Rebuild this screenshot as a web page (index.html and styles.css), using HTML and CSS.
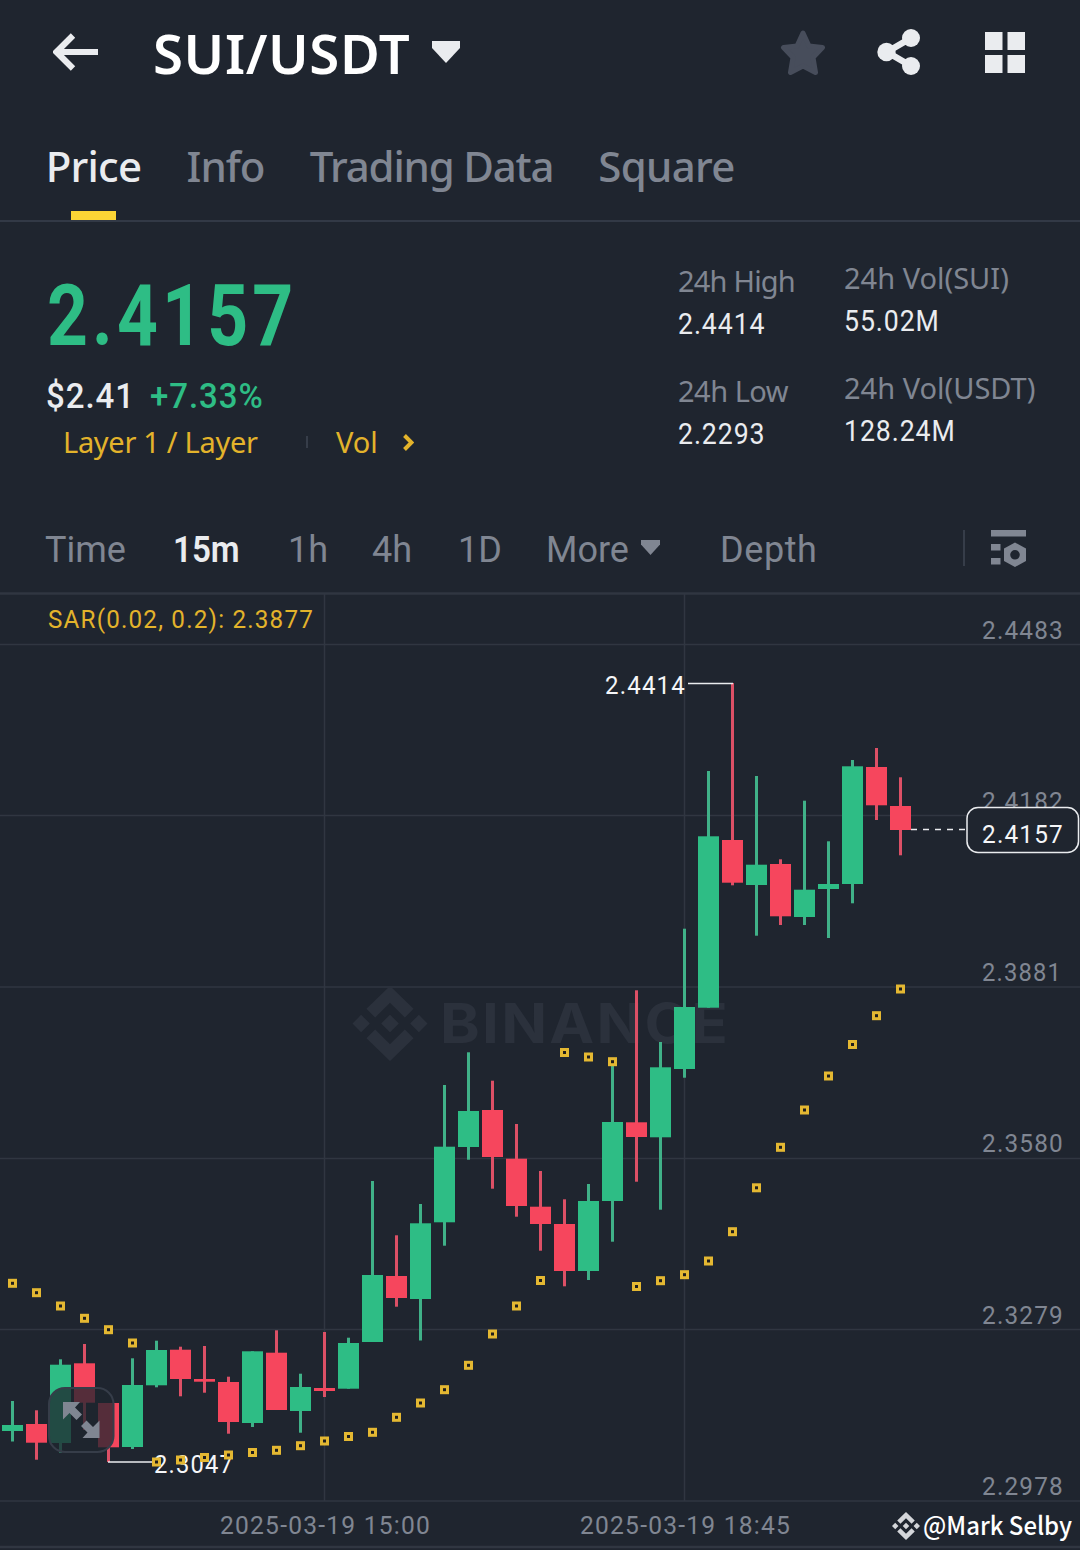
FILE: index.html
```html
<!DOCTYPE html>
<html lang="en">
<head>
<meta charset="utf-8">
<title>SUI/USDT</title>
<link rel="stylesheet" href="styles.css">
</head>
<body>
<header class="topbar">
  <svg class="back" viewBox="0 0 46 38"><path d="M45 19H4M20 2.500L3.500 19L20 35.500" fill="none" stroke="#eaecef" stroke-width="6.200"/></svg>
  <h1 class="pair">SUI/USDT</h1>
  <svg class="caret" viewBox="0 0 28 22"><path d="M0 0H28V7L14 22L0 7Z" fill="#eaecef"/></svg>
  <div class="actions">
    <svg class="star" viewBox="0 0 46 48"><path d="M23 4L29 17L42.500 18.500L33 28.500L35.500 43.500L23 37L10.500 43.500L13 28.500L3.500 18.500L17 17Z" fill="#474d5b" stroke="#474d5b" stroke-width="5" stroke-linejoin="round"/></svg>
    <svg class="share" viewBox="0 0 44 48"><path d="M34 10L10 24L34 38" fill="none" stroke="#eaecef" stroke-width="6.500"/><circle cx="34" cy="10" r="9" fill="#eaecef"/><circle cx="9.500" cy="24" r="9.200" fill="#eaecef"/><circle cx="34" cy="38" r="9" fill="#eaecef"/></svg>
    <svg class="apps" viewBox="0 0 40 41"><path d="M0 0H17.500V18H0ZM22.500 0H40V18H22.500ZM0 23H17.500V41H0ZM22.500 23H40V41H22.500Z" fill="#eaecef"/></svg>
  </div>
</header>

<nav class="tabs">
  <a class="tab price active">Price</a>
  <a class="tab info">Info</a>
  <a class="tab trading">Trading Data</a>
  <a class="tab square">Square</a>
</nav>

<section class="summary">
  <div class="quote">
    <div class="last"><span>2.4157</span></div>
    <div class="change"><span class="usd">$2.41</span><span class="pct">+7.33%</span></div>
    <div class="tags">
      <span class="layer">Layer 1 / Layer</span><i class="sep"></i><span class="vol">Vol</span>
      <svg class="chev" viewBox="0 0 11 17"><path d="M1.500 1.500L8.500 8.500L1.500 15.500" fill="none" stroke="#e3b32b" stroke-width="4"/></svg>
    </div>
  </div>
  <dl class="stats">
    <div><dt class="t-high">24h High</dt><dd>2.4414</dd></div>
    <div><dt class="t-low">24h Low</dt><dd>2.2293</dd></div>
  </dl>
  <dl class="stats volumes">
    <div><dt class="t-sui">24h Vol(SUI)</dt><dd>55.02M</dd></div>
    <div><dt class="t-usdt">24h Vol(USDT)</dt><dd>128.24M</dd></div>
  </dl>
</section>

<nav class="periods">
  <a class="p-time">Time</a>
  <a class="p-15 active">15m</a>
  <a class="p-1h">1h</a>
  <a class="p-4h">4h</a>
  <a class="p-1d">1D</a>
  <a class="p-more">More</a>
  <svg class="more-caret" viewBox="0 0 19 15"><path d="M0 0H19V4.500L9.500 15L0 4.500Z" fill="#808692"/></svg>
  <a class="p-depth">Depth</a>
  <i class="bar"></i>
  <svg class="settings" viewBox="0 0 36 37"><path d="M0 0H35V6.500H0ZM0 14H9.500V20.500H0ZM0 28H9.500V34.500H0Z" fill="#808692"/><path fill-rule="evenodd" d="M24 12.500L35 18.500V31L24 37L13 31V18.500ZM24 20A4.800 4.800 0 1 0 24 29.600A4.800 4.800 0 1 0 24 20Z" fill="#808692"/></svg>
</nav>

<main class="chart">
  <svg id="chart" viewBox="0 592 1080 958" width="1080" height="958">
    <defs>
      <symbol id="mark" viewBox="0 0 126.600 126.600">
        <path d="M38.200 53.200L63.300 28.100L88.400 53.200L103 38.600L63.300 0L23.600 38.600ZM0 63.300L14.600 48.700L29.200 63.300L14.600 77.900ZM38.200 73.400L63.300 98.500L88.400 73.400L103 88L63.300 126.600L23.600 88ZM97.400 63.300L112 48.700L126.600 63.300L112 77.900ZM63.300 48.500L78.100 63.300L63.300 78.100L48.500 63.300Z"/>
      </symbol>
    </defs>
    <path class="grid" d="M0 644.500H1080M0 815.500H1080M0 987H1080M0 1158.500H1080M0 1329.500H1080M0 1501H1080M324.500 594V1501M684.500 594V1501"/>
    <path class="frame" d="M0 593.500H1080M0 1547H1080"/>
    <g class="watermark">
      <use href="#mark" x="352" y="986" width="76" height="75"/>
      <text x="440" y="1043" textLength="290" lengthAdjust="spacingAndGlyphs">BINANCE</text>
    </g>
    <g id="candles"></g>
    <path class="pointer" d="M688 683.500H733M108 1462H156"/>
    <text class="white" x="605" y="694" textLength="81" lengthAdjust="spacingAndGlyphs">2.4414</text>
    <text class="white" x="154" y="1473" textLength="80" lengthAdjust="spacingAndGlyphs">2.3047</text>
    <g id="sar"></g>
    <text class="gold" x="48" y="628" textLength="266" lengthAdjust="spacingAndGlyphs">SAR(0.02, 0.2): 2.3877</text>
    <g class="axis">
      <text x="982" y="638.500" textLength="82" lengthAdjust="spacingAndGlyphs">2.4483</text>
      <text x="982" y="809.500" textLength="82" lengthAdjust="spacingAndGlyphs">2.4182</text>
      <text x="982" y="981" textLength="80" lengthAdjust="spacingAndGlyphs">2.3881</text>
      <text x="982" y="1152" textLength="82" lengthAdjust="spacingAndGlyphs">2.3580</text>
      <text x="982" y="1324" textLength="82" lengthAdjust="spacingAndGlyphs">2.3279</text>
      <text x="982" y="1495" textLength="82" lengthAdjust="spacingAndGlyphs">2.2978</text>
      <text x="220" y="1534" textLength="211" lengthAdjust="spacingAndGlyphs">2025-03-19 15:00</text>
      <text x="580" y="1534" textLength="211" lengthAdjust="spacingAndGlyphs">2025-03-19 18:45</text>
    </g>
    <path d="M911 829.500H966" stroke="#eaecef" stroke-width="1.500" stroke-dasharray="6 6"/>
    <rect x="967" y="807.500" width="111.500" height="45" rx="11" fill="#1f252f" stroke="#eaecef" stroke-width="1.500"/>
    <text class="white" x="982" y="843" textLength="82" lengthAdjust="spacingAndGlyphs">2.4157</text>
    <g class="expand">
      <rect x="49" y="1388" width="64.500" height="64" rx="16" fill="#1f252f" fill-opacity=".75" stroke="#363d49" stroke-width="2"/>
      <path d="M63 1402H80L75 1407.500L82 1414.500L76.500 1420L69.500 1413L63 1419.500ZM99.500 1438H82.500L87.500 1432.500L81 1426L86.500 1420.500L93 1427L99.500 1420.500Z" fill="#808692"/>
    </g>
    <use class="credit-mark" href="#mark" x="892" y="1512" width="28" height="28"/>
    <text class="credit" x="923" y="1535" textLength="149" lengthAdjust="spacingAndGlyphs">@Mark Selby</text>
  </svg>
</main>
<script src="script.js"></script>
</body>
</html>
```
FILE: styles.css
```css
* { box-sizing: border-box; }
body {
  margin: 0;
  width: 1080px;
  height: 1550px;
  overflow: hidden;
  background: #1f252f;
  color: #eaecef;
  font-family: "Noto Sans", sans-serif;
}
svg { display: block; flex: none; }
a, span, dt, dd { white-space: nowrap; }

.topbar { display: flex; align-items: center; height: 104px; padding-left: 53px; }
.back { width: 46px; height: 38px; }
.pair { margin: 2px 0 0 54px; width: 258px; font-size: 54.500px; font-weight: 600; line-height: 72px; letter-spacing: .6px; color: #fff; white-space: nowrap; }
.caret { width: 28px; height: 22px; margin-left: 21px; }
.actions { display: flex; align-items: center; margin-left: auto; padding-right: 55px; }
.star { width: 46px; height: 48px; margin-top: 2px; }
.share { width: 44px; height: 48px; margin-left: 51px; }
.apps { width: 40px; height: 41px; margin-left: 64px; }

.tabs { display: flex; gap: 46px; height: 118px; padding-left: 46px; border-bottom: 2px solid #323946; }
.tab { display: flex; flex-direction: column; align-items: center; padding-top: 34px; font-size: 42px; font-weight: 500; line-height: 56px; letter-spacing: -.8px; color: #808692; height: 116px; }
.tab.active { color: #eaecef; }
.tab.active::after { content: ""; width: 45px; height: 9px; margin-top: auto; background: #fcd535; }
.price { width: 95px; }
.info { width: 77px; letter-spacing: -1px; }
.trading { width: 243px; letter-spacing: -1.200px; }
.square { width: 135px; letter-spacing: -.7px; }

.summary { display: flex; height: 284px; }
.quote { width: 678px; padding: 44px 0 0 47px; }
.last { height: 100px; font: 700 86px/100px Roboto, sans-serif; color: #2ebd85; }
.last span { display: inline-block; transform: scaleX(.83); transform-origin: left; letter-spacing: 5px; }
.change { display: flex; gap: 18px; height: 48px; margin-top: 6px; font: 500 35.500px/48px Roboto, sans-serif; }
.change span { transform: scaleX(.93); transform-origin: left; letter-spacing: 1px; }
.usd { width: 85px; margin-left: -1px; margin-right: 1px; }
.pct { color: #2ebd85; }
.tags { display: flex; align-items: center; height: 44px; padding-left: 16px; font-size: 29px; line-height: 44px; color: #e3b32b; }
.layer { width: 194px; letter-spacing: -.3px; }
.sep { width: 2px; height: 12px; margin: 0 28px 0 49px; background: #363d49; }
.vol { width: 43px; }
.chev { width: 11px; height: 17px; margin-left: 24px; }
.stats { width: 166px; margin: 0; padding-top: 39px; }
.stats > div { height: 110px; }
.volumes { padding-top: 36px; }
.stats dt { height: 40px; font-size: 29px; line-height: 40px; color: #808692; }
.t-high { letter-spacing: -.8px; }
.t-low { letter-spacing: -.5px; }
.stats dd { height: 44px; margin: 0; font: 400 29px/47px Roboto, sans-serif; transform: scaleX(.92); transform-origin: left; letter-spacing: 1px; }

.periods { display: flex; align-items: center; height: 86px; padding: 2px 0 0 45px; font: 400 36px/48px Roboto, sans-serif; color: #808692; }
.periods .active { color: #eaecef; font-weight: 600; transform: scaleX(.92); transform-origin: left; }
.p-time { width: 128px; }
.p-15 { width: 115px; }
.p-1h { width: 84px; }
.p-4h { width: 86px; }
.p-1d { width: 88px; }
.p-more { width: 95px; }
.more-caret { width: 19px; height: 15px; margin-top: -6px; }
.p-depth { width: 243px; margin-left: 60px; letter-spacing: .6px; }
.bar { width: 2px; height: 36px; margin: -4px 26px 0 0; background: #363d49; }
.settings { width: 36px; height: 37px; margin-top: -3px; }

.chart { height: 958px; }
.grid { stroke: #303641; stroke-width: 1.500; }
.frame { stroke: #303641; stroke-width: 2.500; }
.watermark { fill: #2b313c; font: 700 55px Inter, sans-serif; letter-spacing: 2px; }
#chart .axis, .white, .gold { font: 400 26.500px Roboto, sans-serif; letter-spacing: 1.300px; }
.axis { fill: #808692; }
.white { fill: #f5f6f8; }
.gold { fill: #e3b32b; }
.pointer { stroke: #eaecef; stroke-width: 1.500; }
.up { fill: #2ebd85; }
.down { fill: #f6465d; }
.wick.up { fill: #40b188; }
.wick.down { fill: #dc5066; }
.dot { fill: #1f1d1c; stroke: #e4b832; stroke-width: 3; }
.credit-mark { fill: #d4d6da; }
.credit { font: 500 25px "Noto Sans CJK SC", sans-serif; fill: #fff; }
```
FILE: script.js
```js
// One row per 15-minute candle: direction, wick top, body top, body bottom, wick bottom, SAR level.
const candles = [
  ["up", 1401, 1425, 1431, 1441.5, 1283.3],
  ["down", 1410.3, 1424, 1442.7, 1459.7, 1292.7],
  ["up", 1359.3, 1364.7, 1443, 1452.5, 1306],
  ["down", 1344, 1363.3, 1402.7, 1430, 1318.3],
  ["down", 1403, 1403, 1447.3, 1462, 1329.7],
  ["up", 1358.3, 1385, 1447, 1449, 1343],
  ["up", 1340.7, 1350, 1385.3, 1387.3, 1462],
  ["down", 1346.7, 1349.7, 1379, 1396.3, 1460],
  ["down", 1346, 1379, 1381.7, 1392.7, 1457.5],
  ["down", 1376.7, 1382, 1422, 1433.7, 1455],
  ["up", 1351.3, 1351.3, 1423, 1427, 1452.5],
  ["down", 1330.3, 1352.7, 1410, 1410, 1450.3],
  ["up", 1373.7, 1387, 1411, 1432.7, 1445.7],
  ["down", 1332, 1388, 1391, 1397, 1441],
  ["up", 1337.7, 1343, 1388.7, 1388.7, 1436.5],
  ["up", 1181, 1275, 1342, 1342, 1432.3],
  ["down", 1235.3, 1276, 1298, 1306.7, 1417.3],
  ["up", 1204, 1223.3, 1299, 1340.5, 1403],
  ["up", 1085, 1146.7, 1222.3, 1245.7, 1389.7],
  ["up", 1052.3, 1111, 1147, 1159.7, 1365.3],
  ["down", 1080.7, 1110, 1157, 1188.7, 1334],
  ["down", 1124, 1158.7, 1206, 1216.7, 1306],
  ["down", 1171, 1206.7, 1224, 1250.7, 1280.5],
  ["down", 1199.3, 1224, 1271, 1286.3, 1052.5],
  ["up", 1184, 1201, 1271, 1280, 1057],
  ["up", 1062, 1122, 1201, 1241.7, 1061.7],
  ["down", 990.3, 1122.3, 1137, 1181.7, 1286.5],
  ["up", 1042, 1067.3, 1137.3, 1209.7, 1280.7],
  ["up", 928.7, 1007, 1069, 1077.7, 1274.7],
  ["up", 771, 836.3, 1007.7, 1007.7, 1261],
  ["down", 683, 840, 882.7, 885.3, 1231.7],
  ["up", 776, 864.7, 885, 935.7, 1187.8],
  ["down", 859.3, 864, 916.3, 925, 1147.3],
  ["up", 800.7, 889.7, 917, 925, 1110],
  ["up", 841.3, 884, 889, 938, 1076],
  ["up", 760, 766.3, 884, 903.3, 1044.5],
  ["down", 748, 767, 805.3, 820, 1015.7],
  ["down", 777.3, 806, 830, 855.3, 989]
];

function rect(parent, cls, x, y, w, h) {
  const el = document.createElementNS("http://www.w3.org/2000/svg", "rect");
  el.setAttribute("class", cls);
  el.setAttribute("x", x);
  el.setAttribute("y", y);
  el.setAttribute("width", w);
  el.setAttribute("height", h);
  parent.appendChild(el);
}

const bodies = document.getElementById("candles");
const sar = document.getElementById("sar");
candles.forEach(([dir, high, top, bottom, low, level], i) => {
  const x = 12.5 + 24 * i;
  rect(bodies, "wick " + dir, x - 1.5, high, 3, low - high);
  rect(bodies, dir, x - 10.5, top, 21, bottom - top);
  rect(sar, "dot", x - 3, level - 3, 6, 6);
});
```
